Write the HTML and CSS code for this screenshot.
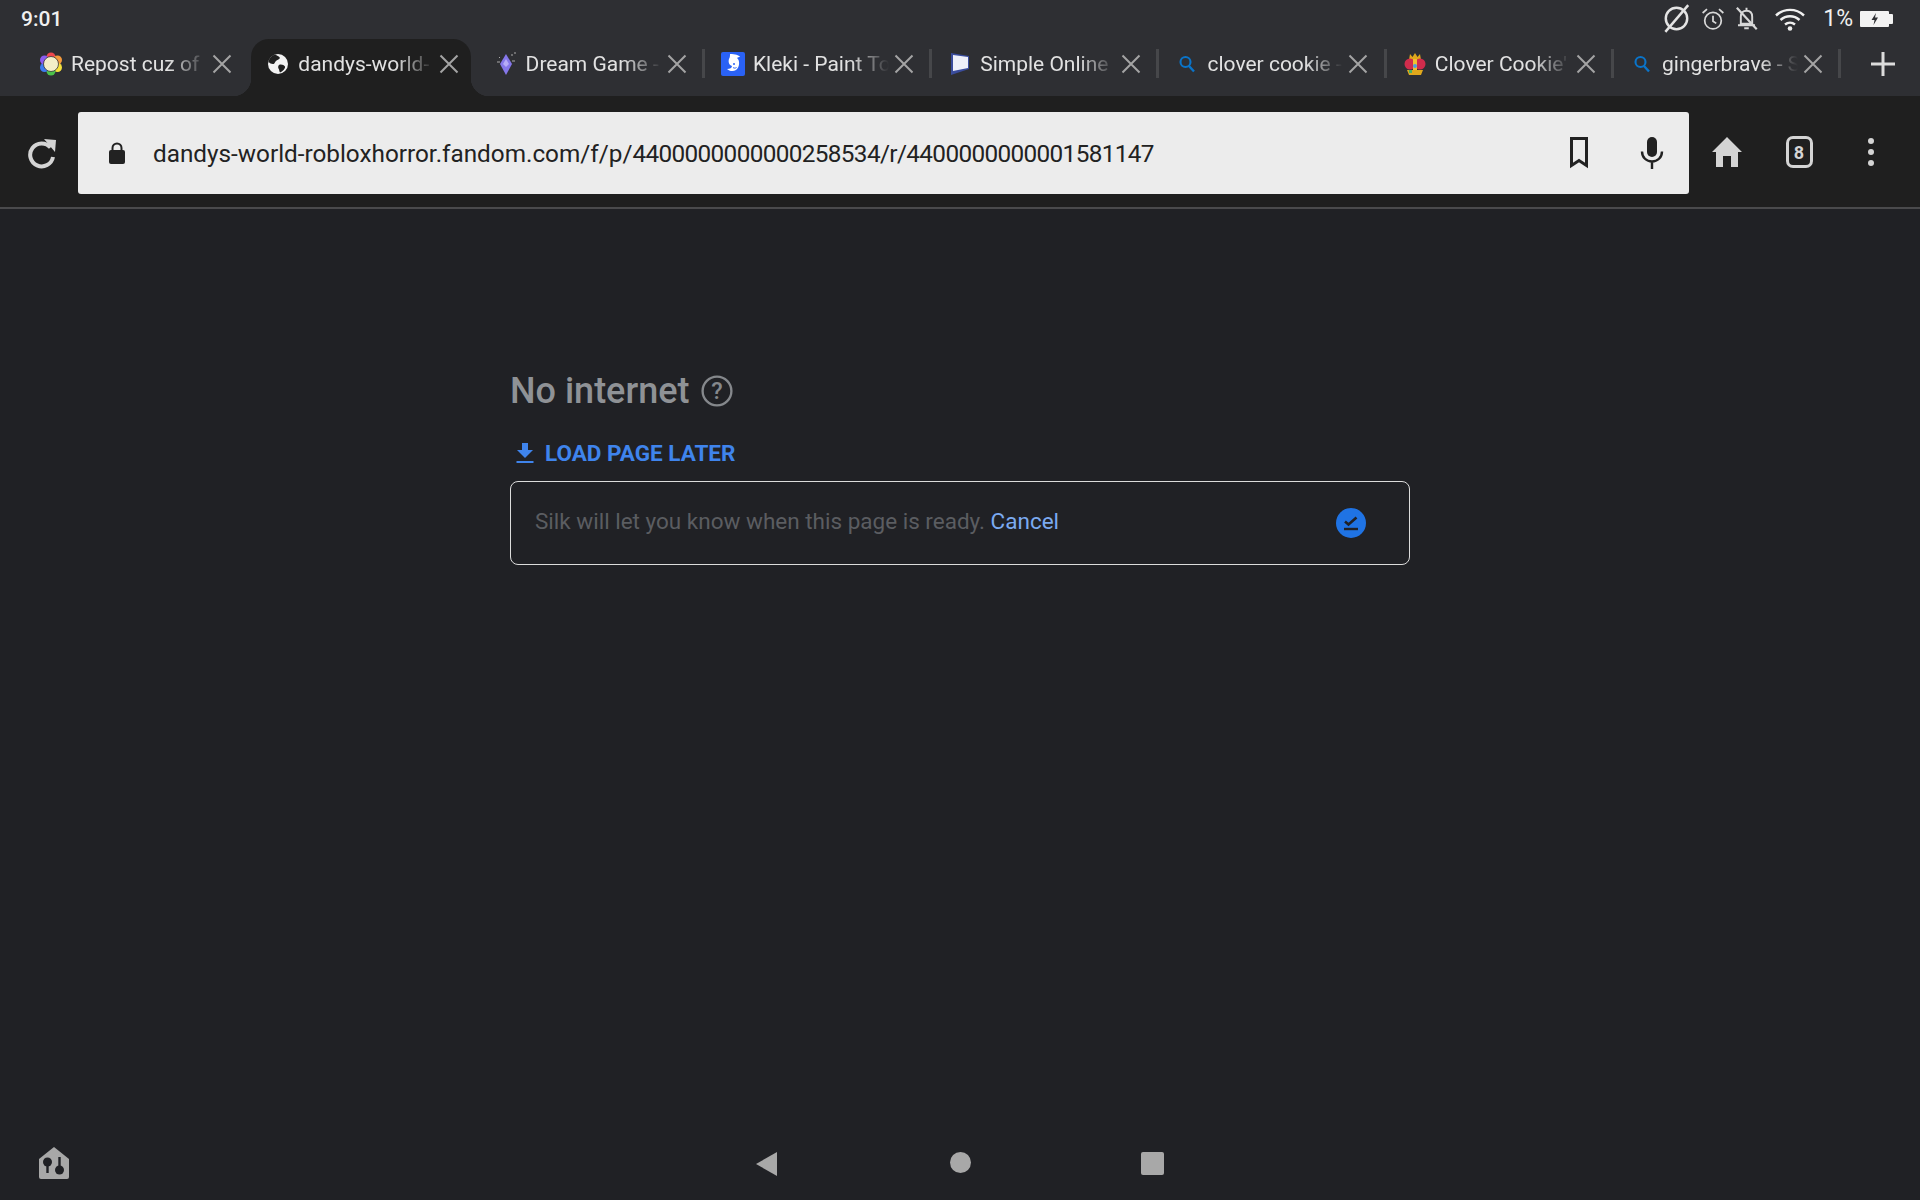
FILE: index.html
```html
<!DOCTYPE html>
<html lang="en">
<head>
    <meta charset="UTF-8">
    <title>No internet</title>
    <link rel="stylesheet" href="styles.css">
</head>
<body>
<!-- Status bar -->
<div class="status-bar">
    <span class="clock">9:01</span>
    <div class="status-icons">
        <svg class="st-saver" viewBox="0 0 26 26"><circle cx="13" cy="13" r="9.6" fill="none" stroke="#e4e4e4" stroke-width="2.2"/><path d="M3 25 23.500 1" stroke="#e4e4e4" stroke-width="2.2" fill="none"/></svg>
        <svg class="st-alarm" viewBox="0 0 22 22"><circle cx="11" cy="12.500" r="7.600" fill="none" stroke="#d8d8d8" stroke-width="1.6"/><path d="M11 8v5l3 2M1.500 5.500 5.500 2M20.500 5.500 16.500 2" stroke="#d8d8d8" stroke-width="1.6" fill="none"/></svg>
        <svg class="st-bell" viewBox="0 0 22 22"><path d="M6 9.500C6 6 8 4.200 11 4.200s5 1.800 5 5.300v6H6zM3.500 17h15M9 19.500h4M11 1.500v2.500" fill="none" stroke="#d8d8d8" stroke-width="1.7"/><path d="M2.500 1.500 20 20.500" stroke="#d8d8d8" stroke-width="1.9"/></svg>
        <svg class="st-wifi" viewBox="0 0 32 24"><path d="M2 8.500C10 1 22 1 30 8.500M6.500 13c5.500-5 13.500-5 19 0M11 17.500c3-2.500 7-2.500 10 0" fill="none" stroke="#f0f0f0" stroke-width="2.400"/><circle cx="16" cy="21.500" r="2.300" fill="#f0f0f0"/></svg>
        <span class="battery-pct">1%</span>
        <svg class="st-battery" viewBox="0 0 33 16"><path d="M1 0h27a1 1 0 0 1 1 1v2h3a1 1 0 0 1 1 1v8a1 1 0 0 1-1 1h-3v2a1 1 0 0 1-1 1H1a1 1 0 0 1-1-1V1a1 1 0 0 1 1-1z" fill="#f2f2f2"/><path d="M16 2 11.500 9h3l-1 5 4.500-7.500h-3z" fill="#2e2f33"/></svg>
    </div>
</div>

<!-- Tabs -->
<div class="tab-strip">
    <div class="tab">
        <svg class="favicon" viewBox="0 0 24 24">
            <circle cx="12" cy="5" r="4.500" fill="#f0484e"/><circle cx="18.500" cy="8" r="4.500" fill="#f59a3c"/><circle cx="18.500" cy="15.500" r="4.500" fill="#f5e23c"/>
            <circle cx="12" cy="19" r="4.500" fill="#4cc24a"/><circle cx="5.500" cy="15.500" r="4.500" fill="#3c7cf0"/><circle cx="5.500" cy="8" r="4.500" fill="#8a5cf0"/>
            <circle cx="12" cy="12" r="7.500" fill="#f3efc8" stroke="#333" stroke-width=".8"/>
        </svg>
        <span class="tab-title">Repost cuz of</span>
        <svg class="tab-close" viewBox="0 0 20 20"><path d="M1.500 1.500l17 17M18.500 1.500l-17 17"/></svg>
    </div>
    <div class="tab active">
        <svg class="favicon" viewBox="0 0 24 24">
            <circle cx="12" cy="12" r="10" fill="#f2f2f2"/>
            <path d="M9 2.500c2 1 4 1.500 5 3.500-1 2-3 1.500-4 3-1.500 1-1 3-3 3-2 0-3-1-4.500-2C3 6 5.500 3.500 9 2.500zM13 13c2-1 5 0 6 1.500.5 1.500-2 5-5 6-1-1-.5-3-1.500-4-.5-1-.5-2.500.5-3.500z" fill="#1f1f1f"/>
        </svg>
        <span class="tab-title">dandys-world-</span>
        <svg class="tab-close" viewBox="0 0 20 20"><path d="M1.500 1.500l17 17M18.500 1.500l-17 17"/></svg>
    </div>
    <div class="tab sep">
        <svg class="favicon" viewBox="0 0 24 24">
            <path d="M12 2 18 12 12 23 6 12z" fill="#8577ea"/><path d="M12 7 15 12 12 15 9 12z" fill="#b6acf7"/>
            <path d="M3 10h3M18 9h3M17 3h2M20 1h2M5 5l1 1" stroke="#aaa" stroke-width="1"/>
        </svg>
        <span class="tab-title">Dream Game -</span>
        <svg class="tab-close" viewBox="0 0 20 20"><path d="M1.500 1.500l17 17M18.500 1.500l-17 17"/></svg>
    </div>
    <div class="tab sep">
        <svg class="favicon" viewBox="0 0 24 24">
            <rect width="24" height="24" rx="2" fill="#2a62f5"/>
            <path d="M9 2c5 0 9 1 10 3-1 0-2 0-3 1 3 2 3 9-1 12-3 2-7 1-9-1 3 0 5-1 5-3-3-1-4-4-3-7 1-2 1-3 1-5z" fill="#fff"/>
            <circle cx="13" cy="12" r="1" fill="#2a62f5"/><path d="M12 15.500c1 .8 2.500.8 3.500 0" stroke="#2a62f5" fill="none"/>
        </svg>
        <span class="tab-title">Kleki - Paint To</span>
        <svg class="tab-close" viewBox="0 0 20 20"><path d="M1.500 1.500l17 17M18.500 1.500l-17 17"/></svg>
    </div>
    <div class="tab sep">
        <svg class="favicon" viewBox="0 0 24 24">
            <path d="M3 1 21 4v13L3 23z" fill="#3a4c9c"/><path d="M5 3 20 5v11L5 19z" fill="#eef0fa"/>
        </svg>
        <span class="tab-title">Simple Online</span>
        <svg class="tab-close" viewBox="0 0 20 20"><path d="M1.500 1.500l17 17M18.500 1.500l-17 17"/></svg>
    </div>
    <div class="tab sep">
        <svg class="favicon" viewBox="0 0 24 24"><circle cx="10.500" cy="10" r="5" fill="none" stroke="#0a74c9" stroke-width="2.100"/><path d="M14 14l5 5.500" stroke="#0a74c9" stroke-width="2.400"/></svg>
        <span class="tab-title">clover cookie -</span>
        <svg class="tab-close" viewBox="0 0 20 20"><path d="M1.500 1.500l17 17M18.500 1.500l-17 17"/></svg>
    </div>
    <div class="tab sep">
        <svg class="favicon" viewBox="0 0 24 24">
            <path d="M6 8 7 2l2.500 3L12 1l2.500 4L17 2l1 6z" fill="#e0a81c"/>
            <circle cx="7" cy="12" r="5.500" fill="#d02c4c"/><circle cx="17" cy="12" r="5.500" fill="#d02c4c"/>
            <path d="M10 7h4v11h-4z" fill="#f0c030"/><circle cx="12" cy="14" r="2" fill="#4c9ce0"/>
            <path d="M4 18h16l-2 5H6z" fill="#e0a81c"/><path d="M6 18h3v3H6z" fill="#4cb060"/>
        </svg>
        <span class="tab-title">Clover Cookie'</span>
        <svg class="tab-close" viewBox="0 0 20 20"><path d="M1.500 1.500l17 17M18.500 1.500l-17 17"/></svg>
    </div>
    <div class="tab sep">
        <svg class="favicon" viewBox="0 0 24 24"><circle cx="10.500" cy="10" r="5" fill="none" stroke="#0a74c9" stroke-width="2.100"/><path d="M14 14l5 5.500" stroke="#0a74c9" stroke-width="2.400"/></svg>
        <span class="tab-title">gingerbrave - S</span>
        <svg class="tab-close" viewBox="0 0 20 20"><path d="M1.500 1.500l17 17M18.500 1.500l-17 17"/></svg>
    </div>
    <svg class="new-tab" viewBox="0 0 24 24"><path d="M12 0v24M0 12h24"/></svg>
</div>

<!-- Toolbar -->
<div class="toolbar">
    <div class="reload">
        <svg viewBox="0 0 32 32"><path d="M24.500 10.500A11.500 11.500 0 1 0 27 20" fill="none" stroke="#d4d4d4" stroke-width="4"/><path d="M18 2 30 3 29 15z" fill="#d4d4d4"/></svg>
    </div>
    <div class="url-bar">
        <svg class="lock" viewBox="0 0 24 24"><path d="M7.500 10V7a4.500 4.500 0 0 1 9 0v3" fill="none" stroke="#222" stroke-width="2"/><rect x="4" y="9" width="16" height="14" rx="2" fill="#222"/></svg>
        <span class="url-text">dandys-world-robloxhorror.fandom.com/f/p/<span class="url-ids">4400000000000258534/r/4400000000001581147</span></span>
        <div class="url-btn"><svg class="bookmark" viewBox="0 0 20 32"><path d="M1.500 1.500h15v27L9 23.500l-7.500 5z" fill="none" stroke="#222" stroke-width="3"/></svg></div>
        <div class="url-btn"><svg class="mic" viewBox="0 0 24 34"><rect x="7" y="1" width="10" height="20" rx="5" fill="#222"/><path d="M2 15.500c0 6 4.500 10 10 10s10-4 10-10M12 25v8" fill="none" stroke="#222" stroke-width="2.400"/></svg></div>
    </div>
    <div class="tool-btn"><svg class="home" viewBox="0 0 30 30"><path d="M15 0 30 15h-4v15h-7V19h-8v11H4V15H0z" fill="#d4d4d4"/></svg></div>
    <div class="tool-btn"><span class="tab-count">8</span></div>
    <div class="tool-btn"><svg class="menu" viewBox="0 0 6 28"><circle cx="3" cy="3" r="3" fill="#d4d4d4"/><circle cx="3" cy="14" r="3" fill="#d4d4d4"/><circle cx="3" cy="25" r="3" fill="#d4d4d4"/></svg></div>
</div>

<!-- Offline page -->
<main class="page">
    <div class="offline">
        <div class="offline-head">
            <h1>No internet</h1>
            <svg class="help" viewBox="0 0 30 30"><circle cx="15" cy="15" r="13.500" fill="none" stroke="#85888c" stroke-width="2.200"/><text x="15" y="22.500" text-anchor="middle" class="help-mark">?</text></svg>
        </div>
        <div class="load-later">
            <svg viewBox="0 0 20 22"><path d="M7 1h6v7h5l-8 8-8-8h5z" fill="#3f84ec"/><path d="M1.500 20h17" stroke="#3f84ec" stroke-width="2"/></svg>
            <span>LOAD PAGE LATER</span>
        </div>
        <div class="notice">
            <p>Silk will let you know when this page is ready. <a href="#cancel">Cancel</a></p>
            <svg class="notice-icon" viewBox="0 0 30 30"><circle cx="15" cy="15" r="15" fill="#1f73e4"/><path d="M9 13.500l3.500 3 8-7" fill="none" stroke="#202125" stroke-width="2.600"/><path d="M8 21h14" stroke="#202125" stroke-width="2.400"/></svg>
        </div>
    </div>
</main>

<!-- Navigation bar -->
<div class="nav-bar">
    <div class="nav-left">
        <svg viewBox="0 0 30 32"><path d="M15 0 30 12v18a2 2 0 0 1-2 2H2a2 2 0 0 1-2-2V12z" fill="#a8a8a8"/><circle cx="8.500" cy="15" r="4.500" fill="#202125"/><path d="M8.500 17v9M20.500 10v10" stroke="#202125" stroke-width="2.400"/><circle cx="20.500" cy="23" r="4.500" fill="#202125"/></svg>
    </div>
    <div class="nav-center">
        <div class="nav-item"><span class="nav-back"></span></div>
        <div class="nav-item"><span class="nav-home"></span></div>
        <div class="nav-item"><span class="nav-recent"></span></div>
    </div>
</div>
</body>
</html>
```

FILE: styles.css
```css
* {
    margin: 0;
    padding: 0;
    box-sizing: border-box;
}
body {
    font-family: Roboto, 'Liberation Sans', sans-serif;
    background-color: #202125;
    height: 1200px;
    display: flex;
    flex-direction: column;
    overflow: hidden;
}
svg {
    display: block;
}

/* Status bar */
.status-bar {
    height: 39px;
    background-color: #2e2f33;
    display: flex;
    align-items: center;
    justify-content: space-between;
    padding: 0 27px 2px 21px;
    color: #f0f0f0;
    font-size: 21px;
    font-weight: 500;
}
.status-icons {
    display: flex;
    align-items: center;
}
.st-saver {
    width: 29px;
    height: 29px;
}
.st-alarm {
    width: 24px;
    height: 24px;
    margin-left: 10px;
}
.st-bell {
    width: 25px;
    height: 25px;
    margin-left: 9px;
}
.st-wifi {
    width: 32px;
    height: 24px;
    margin-left: 15px;
}
.battery-pct {
    margin-left: 17px;
    font-size: 23px;
    font-weight: 400;
}
.st-battery {
    width: 33px;
    height: 16px;
    margin-left: 7px;
}

/* Tabs */
.tab-strip {
    height: 57px;
    background-color: #2e2f33;
    display: flex;
    padding-left: 24px;
    position: relative;
}
.tab {
    width: 227.300px;
    height: 57px;
    display: flex;
    align-items: center;
    padding: 0 17px 8px 15px;
    position: relative;
    color: #e2e2e2;
    font-size: 21px;
}
.tab.active {
    width: 220px;
    margin-right: 7.300px;
    padding-right: 10px;
    background-color: #1f1f1f;
    border-radius: 18px 18px 0 0;
}
.tab.active::before,
.tab.active::after {
    content: '';
    position: absolute;
    bottom: 0;
    width: 18px;
    height: 18px;
}
.tab.active::before {
    left: -18px;
    background: radial-gradient(circle at 0 0, transparent 18px, #1f1f1f 18.500px);
}
.tab.active::after {
    right: -18px;
    background: radial-gradient(circle at 100% 0, transparent 18px, #1f1f1f 18.500px);
}
.tab.sep::after {
    content: '';
    position: absolute;
    right: 1px;
    top: 10px;
    width: 3px;
    height: 29px;
    background-color: #46474a;
}
.favicon {
    width: 24px;
    height: 24px;
    flex-shrink: 0;
}
.tab-title {
    width: 136px;
    margin-left: 8px;
    white-space: nowrap;
    overflow: hidden;
    -webkit-mask-image: linear-gradient(to right, #000 72%, transparent 100%);
    mask-image: linear-gradient(to right, #000 72%, transparent 100%);
}
.tab-close {
    width: 20px;
    height: 20px;
    margin-left: 5px;
    flex-shrink: 0;
    fill: none;
    stroke: #a4a4a4;
    stroke-width: 2;
}
.new-tab {
    position: absolute;
    left: 1871px;
    top: 13px;
    width: 24px;
    height: 24px;
    fill: none;
    stroke: #dcdcdc;
    stroke-width: 3;
}

/* Toolbar */
.toolbar {
    height: 113px;
    background-color: #1f1f1f;
    border-bottom: 2px solid #4a4a4c;
    display: flex;
    align-items: flex-start;
    padding-top: 16px;
}
.reload {
    width: 78px;
    height: 82px;
    display: flex;
    align-items: center;
    justify-content: center;
    padding-left: 6px;
}
.reload svg {
    width: 32px;
    height: 32px;
}
.url-bar {
    width: 1611px;
    height: 82px;
    background-color: #ececec;
    border-radius: 3px;
    display: flex;
    align-items: center;
    padding: 0 1px 0 27px;
    margin-right: 2px;
}
.lock {
    width: 24px;
    height: 24px;
    flex-shrink: 0;
}
.url-text {
    flex: 1;
    margin-left: 24px;
    font-size: 24.300px;
    color: #222;
    white-space: nowrap;
    overflow: hidden;
}
.url-ids {
    letter-spacing: -0.63px;
}
.url-btn {
    width: 72px;
    display: flex;
    justify-content: center;
}
.bookmark {
    width: 20px;
    height: 32px;
}
.mic {
    width: 24px;
    height: 34px;
}
.tool-btn {
    width: 72px;
    height: 80px;
    display: flex;
    align-items: center;
    justify-content: center;
}
.home {
    width: 30px;
    height: 30px;
}
.tab-count {
    width: 27px;
    height: 32px;
    border: 3px solid #d4d4d4;
    border-radius: 7px;
    color: #d4d4d4;
    font-size: 18px;
    font-weight: 700;
    display: flex;
    align-items: center;
    justify-content: center;
}
.menu {
    width: 6px;
    height: 28px;
}

/* Offline page */
.page {
    flex: 1;
    padding-top: 160px;
}
.offline {
    width: 900px;
    margin: 0 auto;
}
.offline-head {
    display: flex;
    align-items: center;
    height: 44px;
}
.offline-head h1 {
    font-size: 36px;
    font-weight: 500;
    color: #8f9296;
}
.help {
    width: 32px;
    height: 32px;
    margin-left: 12px;
}
.help-mark {
    font-size: 22px;
    font-weight: 500;
    fill: #85888c;
}
.load-later {
    display: flex;
    align-items: center;
    height: 30px;
    margin-top: 25px;
    padding-left: 5px;
    color: #3f84ec;
    font-size: 22.500px;
    font-weight: 700;
}
.load-later svg {
    width: 20px;
    height: 22px;
    margin-right: 10px;
}
.notice {
    height: 84px;
    margin-top: 13px;
    border: 1px solid #dcdcdc;
    border-radius: 8px;
    display: flex;
    align-items: center;
    justify-content: space-between;
    padding: 0 43px 0 24px;
}
.notice p {
    font-size: 22.500px;
    color: #5b5d61;
    margin-top: -4px;
}
.notice a {
    color: #7baaf0;
    text-decoration: none;
}
.notice-icon {
    width: 30px;
    height: 30px;
}

/* Navigation bar */
.nav-bar {
    height: 74px;
    display: grid;
    grid-template-columns: 1fr 576px 1fr;
    align-items: center;
}
.nav-left {
    padding-left: 39px;
}
.nav-left svg {
    width: 30px;
    height: 32px;
}
.nav-center {
    display: flex;
    padding-top: 2px;
}
.nav-item {
    width: 192px;
    display: flex;
    justify-content: center;
}
.nav-back {
    width: 0;
    height: 0;
    margin-right: 3px;
    border-top: 12px solid transparent;
    border-bottom: 12px solid transparent;
    border-right: 21px solid #a8a8a8;
}
.nav-home {
    width: 21px;
    height: 21px;
    border-radius: 50%;
    background-color: #a8a8a8;
}
.nav-recent {
    width: 23px;
    height: 23px;
    border-radius: 2px;
    background-color: #a8a8a8;
}
```
